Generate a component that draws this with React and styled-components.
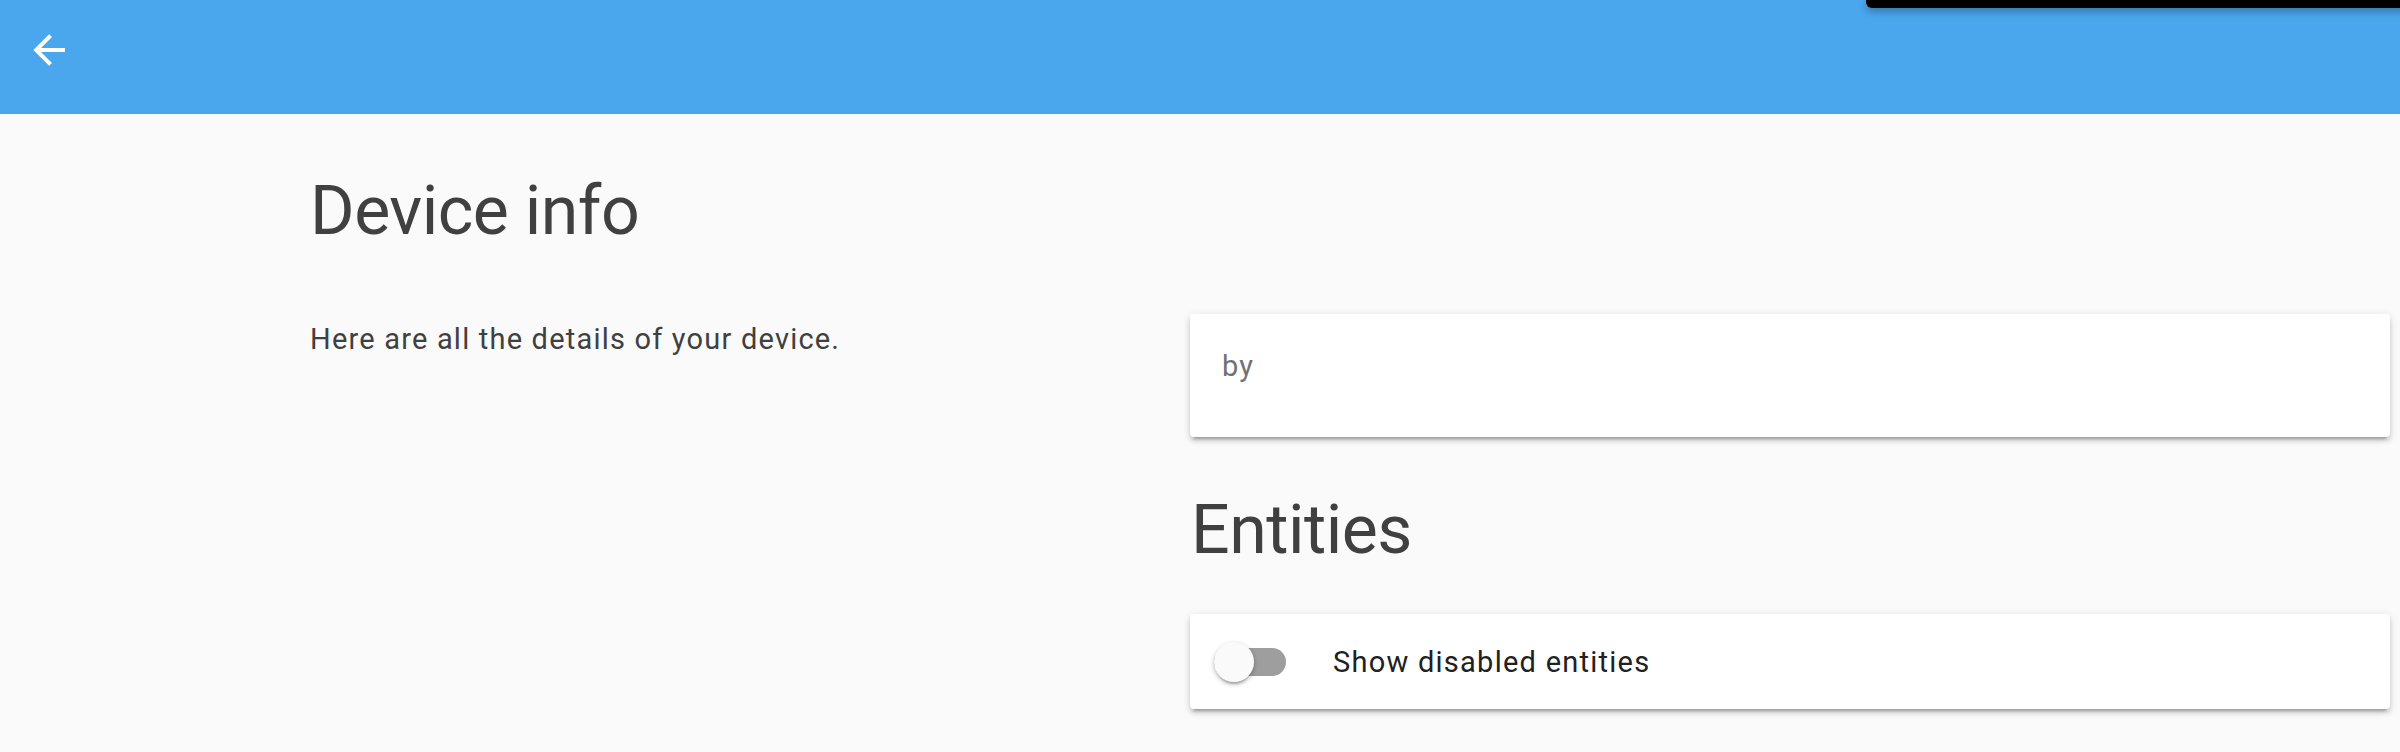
import React from "react";
import styled, { createGlobalStyle } from "styled-components";

const Global = createGlobalStyle`
  html, body {
    margin: 0;
    padding: 0;
    background: #fafafa;
    font-family: Roboto, "Noto Sans", sans-serif;
  }
`;

const Page = styled.div`
  position: relative;
  min-height: 752px;
  overflow: hidden;
  background: #fafafa;
`;

const Toolbar = styled.header`
  height: 114px;
  background: #4aa7ee;
  display: flex;
  align-items: flex-start;
  padding: 26px 0 0 25px;
  box-sizing: border-box;
`;

const BackButton = styled.button`
  width: 48px;
  height: 48px;
  padding: 0;
  border: 0;
  background: transparent;
  cursor: pointer;
  svg {
    display: block;
  }
`;

// toast peeking in from the top edge
const Toast = styled.div`
  position: absolute;
  top: 0;
  left: 1866px;
  right: -20px;
  height: 8px;
  background: #000;
  border-bottom-left-radius: 6px;
  box-shadow: 0 3px 8px rgba(0, 0, 0, 0.35);
`;

const Section = styled.main`
  display: flex;
  padding: 57px 0 40px 310px;
`;

const Side = styled.div`
  width: 876px;
  flex: none;
`;

const Content = styled.div`
  flex: none;
  width: 1204px;
  padding-top: 143px;
`;

const Title = styled.h1`
  margin: 0;
  font-weight: 400;
  font-size: 68px;
  line-height: 80px;
  letter-spacing: -0.5px;
  color: #404040;
`;

const Intro = styled.p`
  margin: 68px 0 0 0;
  font-size: 29px;
  line-height: 40px;
  letter-spacing: 1.2px;
  color: #404040;
`;

const Card = styled.div`
  margin-left: 4px;
  background: #fff;
  border-radius: 4px;
  box-shadow: 0 4px 4px 0 rgba(0, 0, 0, 0.14), 0 2px 10px 0 rgba(0, 0, 0, 0.12),
    0 6px 2px -4px rgba(0, 0, 0, 0.2);
`;

const InfoBody = styled.div`
  padding: 32px 32px 51px;
  font-size: 29px;
  line-height: 40px;
  letter-spacing: 1.2px;
  color: #727272;
`;

const EntitiesTitle = styled(Title)`
  margin: 53px 0 44px 5px;
`;

const ToggleRow = styled.label`
  display: flex;
  align-items: center;
  height: 95px;
  padding-left: 24px;
  box-sizing: border-box;
  font-size: 29px;
  letter-spacing: 1.25px;
  color: #212121;
`;

const Switch = styled.span`
  position: relative;
  width: 72px;
  height: 28px;
  border-radius: 14px;
  background: #9e9e9e;
  flex: none;
  margin-right: 47px;
`;

const Thumb = styled.span`
  position: absolute;
  left: 0;
  top: -6px;
  width: 40px;
  height: 40px;
  border-radius: 50%;
  background: #fafafa;
  box-shadow: 0 4px 2px -2px rgba(0, 0, 0, 0.2), 0 2px 4px 0 rgba(0, 0, 0, 0.14),
    0 2px 6px 0 rgba(0, 0, 0, 0.12);
`;

export default function App() {
  return (
    <Page>
      <Global />
      <Toolbar>
        <BackButton aria-label="Back">
          <svg width="48" height="48" viewBox="0 0 24 24">
            <path
              fill="#fff"
              d="M20,11V13H8L13.5,18.5L12.08,19.92L4.16,12L12.08,4.08L13.5,5.5L8,11H20Z"
            />
          </svg>
        </BackButton>
      </Toolbar>
      <Toast />
      <Section>
        <Side>
          <Title>Device info</Title>
          <Intro>Here are all the details of your device.</Intro>
        </Side>
        <Content>
          <Card>
            <InfoBody>by</InfoBody>
          </Card>
          <EntitiesTitle>Entities</EntitiesTitle>
          <Card>
            <ToggleRow>
              <Switch>
                <Thumb />
              </Switch>
              Show disabled entities
            </ToggleRow>
          </Card>
        </Content>
      </Section>
    </Page>
  );
}
